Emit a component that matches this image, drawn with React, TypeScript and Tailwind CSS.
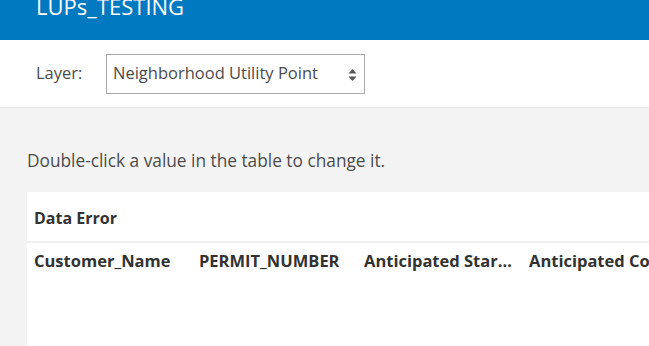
import React from 'react';

const columns = ['Customer_Name', 'PERMIT_NUMBER', 'Anticipated Start_Date', 'Anticipated Completion_Date', 'Status'];

export default function App() {
  return (
    <div className="h-[346px] w-[649px] overflow-hidden bg-[#f3f3f3] text-[#4c4c4c]" style={{ fontFamily: '"Open Sans", "Noto Sans", sans-serif' }}>
      {/* title bar */}
      <header className="flex h-[40px] items-end bg-[#0079c1] pl-[36px]">
        <h1 className="mb-[23px] text-[22px] leading-none text-white">LUPs_TESTING</h1>
      </header>

      {/* layer picker */}
      <div className="flex h-[68px] items-center gap-[22px] border-b border-[#e8e8e8] bg-white pl-[36px]">
        <label className="w-[48px] text-[16.5px]">Layer:</label>
        <div className="relative flex h-[40px] w-[259px] items-center border border-[#a9a9a9] bg-white pl-[6px]">
          <span className="text-[16.5px] text-[#4c4c4c]">Neighborhood Utility Point</span>
          <svg className="absolute right-[7px] top-[13px]" width="9" height="14" viewBox="0 0 9 14">
            <path d="M4.5 1 L8.5 5.5 H0.5 Z" fill="#555" />
            <path d="M4.5 13 L8.5 8.5 H0.5 Z" fill="#555" />
          </svg>
        </div>
      </div>

      {/* content */}
      <div className="pl-[27px] pt-[43px]">
        <p className="text-[17.3px] leading-5">Double-click a value in the table to change it.</p>
        <div className="mt-[21px] bg-white">
          <div className="flex h-[51px] items-center border-b-2 border-[#efefef] pl-[7px] pt-[2px]">
            <h2 className="text-[16px] font-bold text-[#323232]">Data Error</h2>
          </div>
          <div className="flex h-[160px] pl-[7px] pt-[6px]">
            {columns.map((c) => (
              <div key={c} className="w-[165px] shrink-0 truncate pr-[14px] text-[16.5px] font-bold text-[#323232]">
                {c}
              </div>
            ))}
          </div>
        </div>
      </div>
    </div>
  );
}
